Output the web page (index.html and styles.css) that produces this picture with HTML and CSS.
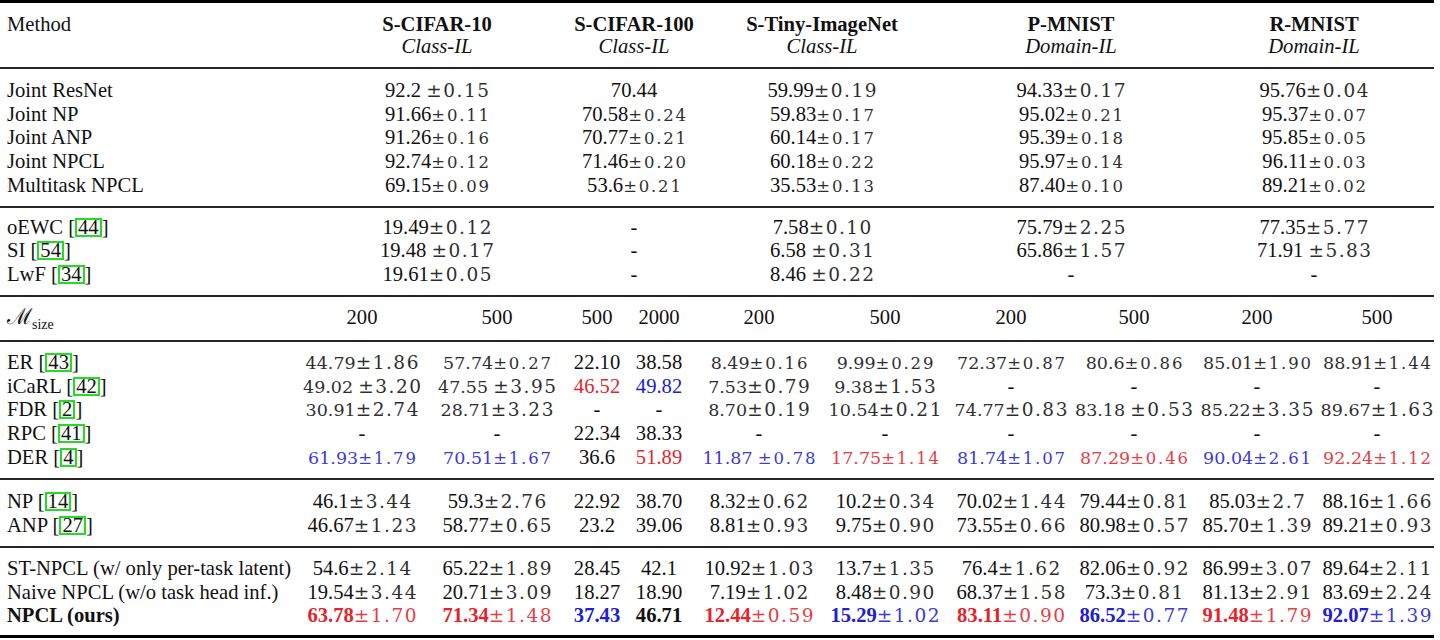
FILE: index.html
```html
<!DOCTYPE html>
<html>
<head>
<meta charset="utf-8">
<title>Results table</title>
<link rel="stylesheet" href="styles.css">
</head>
<body>
<table class="res">
<colgroup>
<col class="w0"><col class="wa"><col class="wb"><col class="wc"><col class="wd"><col class="we"><col class="wf"><col class="wg"><col class="wh"><col class="wi"><col class="wj">
</colgroup>
<thead>
<tr><th>Method</th><th colspan="2"><b>S-CIFAR-10</b><br><i>Class-IL</i></th><th colspan="2"><b>S-CIFAR-100</b><br><i>Class-IL</i></th><th colspan="2"><b>S-Tiny-ImageNet</b><br><i>Class-IL</i></th><th colspan="2"><b>P-MNIST</b><br><i>Domain-IL</i></th><th colspan="2"><b>R-MNIST</b><br><i>Domain-IL</i></th></tr>
</thead>
<tbody class="g g1">
<tr><td>Joint ResNet</td><td colspan="2">92.2 <span class="p">±0.15</span></td><td colspan="2">70.44</td><td colspan="2">59.99<span class="p">±0.19</span></td><td colspan="2">94.33<span class="p">±0.17</span></td><td colspan="2">95.76<span class="p">±0.04</span></td></tr>
<tr><td>Joint NP</td><td colspan="2">91.66<span class="s">±0.11</span></td><td colspan="2">70.58<span class="s">±0.24</span></td><td colspan="2">59.83<span class="s">±0.17</span></td><td colspan="2">95.02<span class="s">±0.21</span></td><td colspan="2">95.37<span class="s">±0.07</span></td></tr>
<tr><td>Joint ANP</td><td colspan="2">91.26<span class="s">±0.16</span></td><td colspan="2">70.77<span class="s">±0.21</span></td><td colspan="2">60.14<span class="s">±0.17</span></td><td colspan="2">95.39<span class="s">±0.18</span></td><td colspan="2">95.85<span class="s">±0.05</span></td></tr>
<tr><td>Joint NPCL</td><td colspan="2">92.74<span class="s">±0.12</span></td><td colspan="2">71.46<span class="s">±0.20</span></td><td colspan="2">60.18<span class="s">±0.22</span></td><td colspan="2">95.97<span class="s">±0.14</span></td><td colspan="2">96.11<span class="s">±0.03</span></td></tr>
<tr><td>Multitask NPCL</td><td colspan="2">69.15<span class="s">±0.09</span></td><td colspan="2">53.6<span class="s">±0.21</span></td><td colspan="2">35.53<span class="s">±0.13</span></td><td colspan="2">87.40<span class="s">±0.10</span></td><td colspan="2">89.21<span class="s">±0.02</span></td></tr>
</tbody>
<tbody class="g g2">
<tr><td>oEWC [<span class="ct">44</span>]</td><td colspan="2">19.49<span class="p">±0.12</span></td><td colspan="2">-</td><td colspan="2">7.58<span class="p">±0.10</span></td><td colspan="2">75.79<span class="p">±2.25</span></td><td colspan="2">77.35<span class="p">±5.77</span></td></tr>
<tr><td>SI [<span class="ct">54</span>]</td><td colspan="2">19.48 <span class="p">±0.17</span></td><td colspan="2">-</td><td colspan="2">6.58 <span class="p">±0.31</span></td><td colspan="2">65.86<span class="p">±1.57</span></td><td colspan="2">71.91 <span class="p">±5.83</span></td></tr>
<tr><td>LwF [<span class="ct">34</span>]</td><td colspan="2">19.61<span class="p">±0.05</span></td><td colspan="2">-</td><td colspan="2">8.46 <span class="p">±0.22</span></td><td colspan="2">-</td><td colspan="2">-</td></tr>
</tbody>
<tbody class="g g3">
<tr><td><span class="mc">ℳ</span><sub>size</sub></td><td>200</td><td>500</td><td>500</td><td>2000</td><td>200</td><td>500</td><td>200</td><td>500</td><td>200</td><td>500</td></tr>
</tbody>
<tbody class="g g4">
<tr><td>ER [<span class="ct">43</span>]</td><td><span class="c">44.79</span><span class="p">±1.86</span></td><td><span class="c">57.74</span><span class="s">±0.27</span></td><td>22.10</td><td>38.58</td><td><span class="c">8.49</span><span class="s">±0.16</span></td><td><span class="c">9.99</span><span class="s">±0.29</span></td><td><span class="c">72.37</span><span class="s">±0.87</span></td><td><span class="c">80.6</span><span class="s">±0.86</span></td><td><span class="c">85.01</span><span class="s">±1.90</span></td><td><span class="c">88.91</span><span class="s">±1.44</span></td></tr>
<tr><td>iCaRL [<span class="ct">42</span>]</td><td><span class="c">49.02</span> <span class="p">±3.20</span></td><td><span class="c">47.55</span> <span class="p">±3.95</span></td><td class="r">46.52</td><td class="bl">49.82</td><td><span class="c">7.53</span><span class="p">±0.79</span></td><td><span class="c">9.38</span><span class="p">±1.53</span></td><td>-</td><td>-</td><td>-</td><td>-</td></tr>
<tr><td>FDR [<span class="ct">2</span>]</td><td><span class="c">30.91</span><span class="p">±2.74</span></td><td><span class="c">28.71</span><span class="p">±3.23</span></td><td>-</td><td>-</td><td><span class="c">8.70</span><span class="p">±0.19</span></td><td><span class="c">10.54</span><span class="p">±0.21</span></td><td><span class="c">74.77</span><span class="p">±0.83</span></td><td><span class="c">83.18</span> <span class="p">±0.53</span></td><td><span class="c">85.22</span><span class="p">±3.35</span></td><td><span class="c">89.67</span><span class="p">±1.63</span></td></tr>
<tr><td>RPC [<span class="ct">41</span>]</td><td>-</td><td>-</td><td>22.34</td><td>38.33</td><td>-</td><td>-</td><td>-</td><td>-</td><td>-</td><td>-</td></tr>
<tr><td>DER [<span class="ct">4</span>]</td><td class="bl"><span class="c">61.93</span><span class="s">±1.79</span></td><td class="bl"><span class="c">70.51</span><span class="s">±1.67</span></td><td>36.6</td><td class="r">51.89</td><td class="bl"><span class="c">11.87</span> <span class="s">±0.78</span></td><td class="r"><span class="c">17.75</span><span class="s">±1.14</span></td><td class="bl"><span class="c">81.74</span><span class="s">±1.07</span></td><td class="r"><span class="c">87.29</span><span class="s">±0.46</span></td><td class="bl"><span class="c">90.04</span><span class="s">±2.61</span></td><td class="r"><span class="c">92.24</span><span class="s">±1.12</span></td></tr>
</tbody>
<tbody class="g g5">
<tr><td>NP [<span class="ct">14</span>]</td><td>46.1<span class="p">±3.44</span></td><td>59.3<span class="p">±2.76</span></td><td>22.92</td><td>38.70</td><td>8.32<span class="p">±0.62</span></td><td>10.2<span class="p">±0.34</span></td><td>70.02<span class="p">±1.44</span></td><td>79.44<span class="p">±0.81</span></td><td>85.03<span class="p">±2.7</span></td><td>88.16<span class="p">±1.66</span></td></tr>
<tr><td>ANP [<span class="ct">27</span>]</td><td>46.67<span class="p">±1.23</span></td><td>58.77<span class="p">±0.65</span></td><td>23.2</td><td>39.06</td><td>8.81<span class="p">±0.93</span></td><td>9.75<span class="p">±0.90</span></td><td>73.55<span class="p">±0.66</span></td><td>80.98<span class="p">±0.57</span></td><td>85.70<span class="p">±1.39</span></td><td>89.21<span class="p">±0.93</span></td></tr>
</tbody>
<tbody class="g g6">
<tr><td>ST-NPCL (w/ only per-task latent)</td><td>54.6<span class="p">±2.14</span></td><td>65.22<span class="p">±1.89</span></td><td>28.45</td><td>42.1</td><td>10.92<span class="p">±1.03</span></td><td>13.7<span class="p">±1.35</span></td><td>76.4<span class="p">±1.62</span></td><td>82.06<span class="p">±0.92</span></td><td>86.99<span class="p">±3.07</span></td><td>89.64<span class="p">±2.11</span></td></tr>
<tr><td>Naive NPCL (w/o task head inf.)</td><td>19.54<span class="p">±3.44</span></td><td>20.71<span class="p">±3.09</span></td><td>18.27</td><td>18.90</td><td>7.19<span class="p">±1.02</span></td><td>8.48<span class="p">±0.90</span></td><td>68.37<span class="p">±1.58</span></td><td>73.3<span class="p">±0.81</span></td><td>81.13<span class="p">±2.91</span></td><td>83.69<span class="p">±2.24</span></td></tr>
<tr><td><b>NPCL (ours)</b></td><td class="r"><b>63.78</b><span class="p">±1.70</span></td><td class="r"><b>71.34</b><span class="p">±1.48</span></td><td class="bl"><b>37.43</b></td><td><b>46.71</b></td><td class="r"><b>12.44</b><span class="p">±0.59</span></td><td class="bl"><b>15.29</b><span class="p">±1.02</span></td><td class="r"><b>83.11</b><span class="p">±0.90</span></td><td class="bl"><b>86.52</b><span class="p">±0.77</span></td><td class="r"><b>91.48</b><span class="p">±1.79</span></td><td class="bl"><b>92.07</b><span class="p">±1.39</span></td></tr>
</tbody>
</table>
</body>
</html>
```

FILE: styles.css
```css
html, body {
  margin: 0;
  background: #ffffff;
}

body {
  font-family: "Liberation Serif", "Times New Roman", serif;
  font-size: 20.6px;
  color: #111111;
}

.res {
  border-collapse: separate;
  border-spacing: 0;
  table-layout: fixed;
  width: 1434px;
}

.w0 { width: 302px; }
.wa { width: 120px; }
.wb { width: 150px; }
.wc { width: 50px; }
.wd { width: 74px; }
.we { width: 126px; }
.wf { width: 126px; }
.wg { width: 126px; }
.wh { width: 120px; }
.wi { width: 126px; }
.wj { width: 114px; }

.res td,
.res th {
  padding: 0;
  text-align: center;
  white-space: nowrap;
  line-height: 23.7px;
  font-weight: normal;
  vertical-align: baseline;
}

.res td:first-child,
.res th:first-child {
  text-align: left;
  padding-left: 7px;
}

.res thead th {
  border-top: 3px solid #000;
  padding-top: 10px;
  padding-bottom: 10px;
  line-height: 22px;
  vertical-align: top;
}

.res th b { font-weight: bold; }

.g > tr:first-child > td { border-top: 2px solid #262626; }

.g1 > tr:first-child > td { padding-top: 10px; }
.g1 > tr:last-child > td { padding-bottom: 8.2px; }
.g2 > tr:first-child > td { padding-top: 8px; }
.g2 > tr:last-child > td { padding-bottom: 8.6px; }
.g3 > tr:first-child > td { padding-top: 9px; padding-bottom: 8px; }
.g4 > tr:first-child > td { padding-top: 8.5px; }
.g4 > tr:last-child > td { padding-bottom: 8.2px; }
.g5 > tr:first-child > td { padding-top: 10.5px; }
.g5 > tr:last-child > td { padding-bottom: 8.8px; }
.g6 > tr:first-child > td { padding-top: 8.6px; }
.g6 > tr:last-child > td { padding-bottom: 6.5px; border-bottom: 3px solid #000; }

.c {
  font-family: "DejaVu Serif", serif;
  font-size: 17.5px;
  line-height: 1;
  opacity: 0.88;
}

.p {
  font-family: "DejaVu Serif", serif;
  font-size: 18.5px;
  line-height: 1;
  letter-spacing: 1.5px;
  margin-right: -1.5px;
  opacity: 0.88;
}

.s {
  font-family: "DejaVu Serif", serif;
  font-size: 16.5px;
  line-height: 1;
  letter-spacing: 1.8px;
  margin-right: -1.8px;
  opacity: 0.88;
}

.r { color: #e3242b; }
.bl { color: #2020d2; }

.ct {
  display: inline-block;
  border: 2px solid #22dd22;
  line-height: 15px;
  padding: 0 1px;
}

.mc {
  font-family: "DejaVu Serif", serif;
  font-size: 22px;
  line-height: 1;
}

sub {
  font-size: 14px;
  line-height: 1;
  vertical-align: -5px;
}
```
